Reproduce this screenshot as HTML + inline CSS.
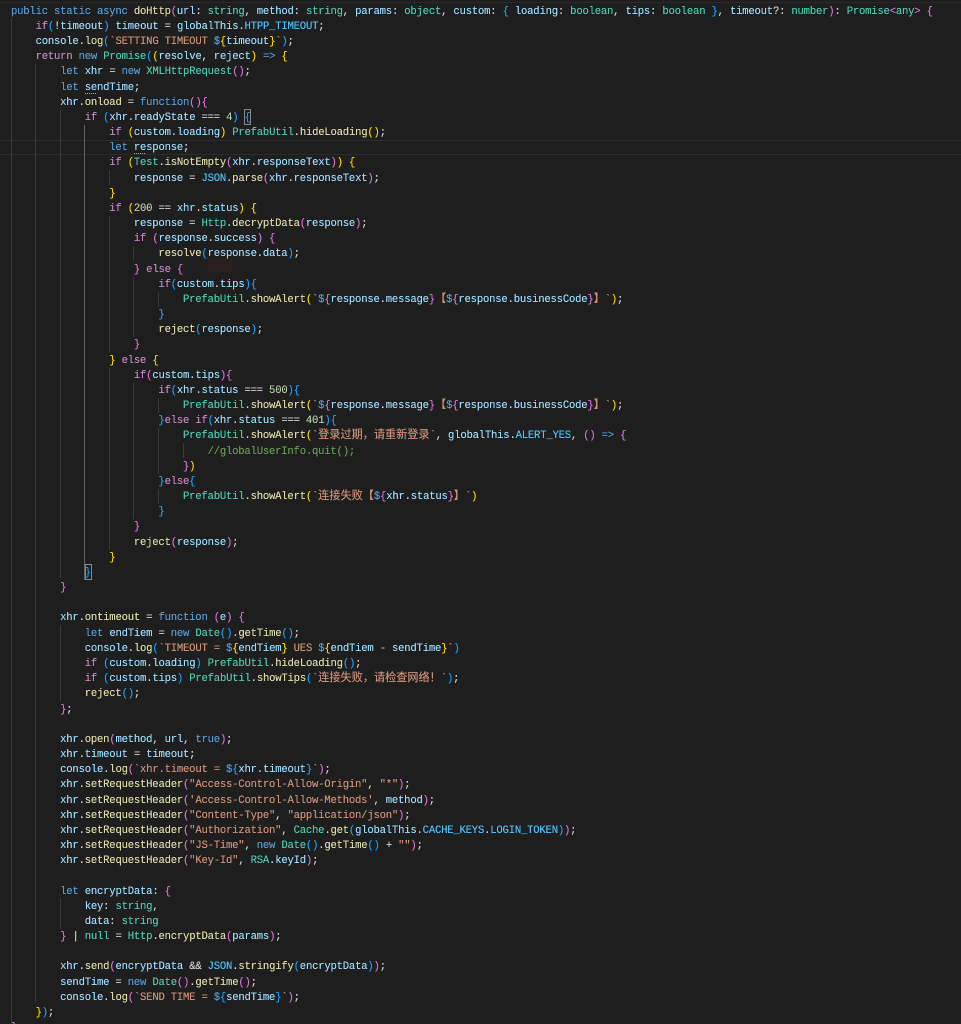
<!DOCTYPE html>
<html><head><meta charset="utf-8"><style>
html,body{margin:0;padding:0;background:#1e1e1e;width:961px;height:1024px;overflow:hidden}
#w{position:relative;width:961px;height:1024px;overflow:hidden;font:10.6px/15.17px "Liberation Mono","Noto Sans CJK SC",monospace;color:#d4d4d4;letter-spacing:-.215px;filter:blur(.3px)}
pre{position:absolute;left:11px;margin:1.3px 0 0;font:inherit;white-space:pre;height:15.17px;text-shadow:0 0 .3px currentColor}
i{font-style:normal}
.k{color:#569cd6}.c{color:#c586c0}.v{color:#9cdcfe}.t{color:#4ec9b0}.f{color:#dcdcaa}.s{color:#ce9178}.n{color:#b5cea8}.m{color:#6a9955}.u{color:#4fc1ff}
.g{color:#ffd700}.p{color:#da70d6}.b{color:#179fff}
.z{font-size:11.15px;letter-spacing:0}
.r{position:absolute;width:1px;background:#3a3a3a}
.a{position:absolute}
</style></head><body><div id="w">
<div class="a" style="left:0;top:2px;width:961px;height:1px;background:#2a2a2a"></div>
<div class="a" style="left:0;top:140px;width:961px;height:1px;background:#2c2c2c"></div>
<div class="a" style="left:0;top:153.5px;width:961px;height:1px;background:#2c2c2c"></div>
<div class="a" style="left:208px;top:258px;width:24px;height:14px;background:#33211f;opacity:.5"></div>

<div class="r" style="left:11px;top:18px;height:1006px"></div>
<div class="r" style="left:35px;top:64px;height:938px"></div>
<div class="r" style="left:60px;top:110px;height:468px"></div>
<div class="r" style="left:60px;top:625px;height:76px"></div>
<div class="r" style="left:60px;top:898px;height:31px"></div>
<div class="r" style="left:84px;top:125px;height:455px;background:#626262"></div>
<div class="r" style="left:109px;top:170px;height:15px"></div>
<div class="r" style="left:109px;top:216px;height:136px"></div>
<div class="r" style="left:109px;top:368px;height:182px"></div>
<div class="r" style="left:133px;top:246px;height:15px"></div>
<div class="r" style="left:133px;top:277px;height:60px"></div>
<div class="r" style="left:133px;top:383px;height:136px"></div>
<div class="r" style="left:158px;top:292px;height:15px"></div>
<div class="r" style="left:158px;top:398px;height:15px"></div>
<div class="r" style="left:158px;top:428px;height:46px"></div>
<div class="r" style="left:158px;top:489px;height:15px"></div>
<div class="r" style="left:183px;top:443px;height:15px"></div>

<div class="a" style="left:244px;top:109px;width:5px;height:14px;border:1px solid #888"></div>
<div class="a" style="left:85px;top:564px;width:5px;height:14px;border:1px solid #888"></div>
<div class="a" style="left:85px;top:92.5px;width:11px;height:0;border-top:1px dotted #aaa"></div>
<div class="a" style="left:134px;top:153px;width:11px;height:0;border-top:1px dotted #aaa"></div>

<pre style="top:3.4px"><i class="k">public static async</i> <i class="f">doHttp</i><i class="p">(</i><i class="v">url</i>: <i class="t">string</i>, <i class="v">method</i>: <i class="t">string</i>, <i class="v">params</i>: <i class="t">object</i>, <i class="v">custom</i>: <i class="b">{</i> <i class="v">loading</i>: <i class="t">boolean</i>, <i class="v">tips</i>: <i class="t">boolean</i> <i class="b">}</i>, <i class="v">timeout</i>?: <i class="t">number</i><i class="p">)</i>: <i class="t">Promise</i><i class="p">&lt;</i><i class="t">any</i><i class="p">&gt;</i> <i class="p">{</i></pre>
<pre style="top:18.57px">    <i class="c">if</i><i class="b">(</i>!<i class="v">timeout</i><i class="b">)</i> <i class="v">timeout</i> = <i class="v">globalThis</i>.<i class="u">HTPP_TIMEOUT</i>;</pre>
<pre style="top:33.74px">    <i class="v">console</i>.<i class="f">log</i><i class="b">(</i><i class="s">`SETTING TIMEOUT </i><i class="k">$</i><i class="g">{</i><i class="v">timeout</i><i class="g">}</i><i class="s">`</i><i class="b">)</i>;</pre>
<pre style="top:48.91px">    <i class="c">return</i> <i class="k">new</i> <i class="t">Promise</i><i class="b">(</i><i class="g">(</i><i class="v">resolve</i>, <i class="v">reject</i><i class="g">)</i> <i class="k">=&gt;</i> <i class="g">{</i></pre>
<pre style="top:64.08px">        <i class="k">let</i> <i class="v">xhr</i> = <i class="k">new</i> <i class="t">XMLHttpRequest</i><i class="p">()</i>;</pre>
<pre style="top:79.25px">        <i class="k">let</i> <i class="v">sendTime</i>;</pre>
<pre style="top:94.42px">        <i class="v">xhr</i>.<i class="f">onload</i> = <i class="k">function</i><i class="p">(){</i></pre>
<pre style="top:109.59px">            <i class="c">if</i> <i class="b">(</i><i class="v">xhr</i>.<i class="v">readyState</i> === <i class="n">4</i><i class="b">)</i> <i class="b">{</i></pre>
<pre style="top:124.76px">                <i class="c">if</i> <i class="g">(</i><i class="v">custom</i>.<i class="v">loading</i><i class="g">)</i> <i class="t">PrefabUtil</i>.<i class="f">hideLoading</i><i class="g">()</i>;</pre>
<pre style="top:139.93px">                <i class="k">let</i> <i class="v">response</i>;</pre>
<pre style="top:155.1px">                <i class="c">if</i> <i class="g">(</i><i class="t">Test</i>.<i class="f">isNotEmpty</i><i class="p">(</i><i class="v">xhr</i>.<i class="v">responseText</i><i class="p">)</i><i class="g">)</i> <i class="g">{</i></pre>
<pre style="top:170.27px">                    <i class="v">response</i> = <i class="u">JSON</i>.<i class="f">parse</i><i class="p">(</i><i class="v">xhr</i>.<i class="v">responseText</i><i class="p">)</i>;</pre>
<pre style="top:185.44px">                <i class="g">}</i></pre>
<pre style="top:200.61px">                <i class="c">if</i> <i class="g">(</i><i class="n">200</i> == <i class="v">xhr</i>.<i class="v">status</i><i class="g">)</i> <i class="g">{</i></pre>
<pre style="top:215.78px">                    <i class="v">response</i> = <i class="t">Http</i>.<i class="f">decryptData</i><i class="p">(</i><i class="v">response</i><i class="p">)</i>;</pre>
<pre style="top:230.95px">                    <i class="c">if</i> <i class="p">(</i><i class="v">response</i>.<i class="v">success</i><i class="p">)</i> <i class="p">{</i></pre>
<pre style="top:246.12px">                        <i class="f">resolve</i><i class="b">(</i><i class="v">response</i>.<i class="v">data</i><i class="b">)</i>;</pre>
<pre style="top:261.29px">                    <i class="p">}</i> <i class="c">else</i> <i class="p">{</i></pre>
<pre style="top:276.46px">                        <i class="c">if</i><i class="b">(</i><i class="v">custom</i>.<i class="v">tips</i><i class="b">){</i></pre>
<pre style="top:291.63px">                            <i class="t">PrefabUtil</i>.<i class="f">showAlert</i><i class="g">(</i><i class="s">`</i><i class="k">$</i><i class="p">{</i><i class="v">response</i>.<i class="v">message</i><i class="p">}</i><i class="s z">【</i><i class="k">$</i><i class="p">{</i><i class="v">response</i>.<i class="v">businessCode</i><i class="p">}</i><i class="s z">】</i><i class="s">`</i><i class="g">)</i>;</pre>
<pre style="top:306.8px">                        <i class="b">}</i></pre>
<pre style="top:321.97px">                        <i class="f">reject</i><i class="b">(</i><i class="v">response</i><i class="b">)</i>;</pre>
<pre style="top:337.14px">                    <i class="p">}</i></pre>
<pre style="top:352.31px">                <i class="g">}</i> <i class="c">else</i> <i class="g">{</i></pre>
<pre style="top:367.48px">                    <i class="c">if</i><i class="p">(</i><i class="v">custom</i>.<i class="v">tips</i><i class="p">){</i></pre>
<pre style="top:382.65px">                        <i class="c">if</i><i class="b">(</i><i class="v">xhr</i>.<i class="v">status</i> === <i class="n">500</i><i class="b">){</i></pre>
<pre style="top:397.82px">                            <i class="t">PrefabUtil</i>.<i class="f">showAlert</i><i class="g">(</i><i class="s">`</i><i class="k">$</i><i class="p">{</i><i class="v">response</i>.<i class="v">message</i><i class="p">}</i><i class="s z">【</i><i class="k">$</i><i class="p">{</i><i class="v">response</i>.<i class="v">businessCode</i><i class="p">}</i><i class="s z">】</i><i class="s">`</i><i class="g">)</i>;</pre>
<pre style="top:412.99px">                        <i class="b">}</i><i class="c">else if</i><i class="b">(</i><i class="v">xhr</i>.<i class="v">status</i> === <i class="n">401</i><i class="b">){</i></pre>
<pre style="top:428.16px">                            <i class="t">PrefabUtil</i>.<i class="f">showAlert</i><i class="g">(</i><i class="s">`</i><i class="s z">登录过期，请重新登录</i><i class="s">`</i>, <i class="v">globalThis</i>.<i class="u">ALERT_YES</i>, <i class="p">()</i> <i class="k">=&gt;</i> <i class="p">{</i></pre>
<pre style="top:443.33px">                                <i class="m">//globalUserInfo.quit();</i></pre>
<pre style="top:458.5px">                            <i class="p">}</i><i class="g">)</i></pre>
<pre style="top:473.67px">                        <i class="b">}</i><i class="c">else</i><i class="b">{</i></pre>
<pre style="top:488.84px">                            <i class="t">PrefabUtil</i>.<i class="f">showAlert</i><i class="g">(</i><i class="s">`</i><i class="s z">连接失败【</i><i class="k">$</i><i class="p">{</i><i class="v">xhr</i>.<i class="v">status</i><i class="p">}</i><i class="s z">】</i><i class="s">`</i><i class="g">)</i></pre>
<pre style="top:504.01px">                        <i class="b">}</i></pre>
<pre style="top:519.18px">                    <i class="p">}</i></pre>
<pre style="top:534.35px">                    <i class="f">reject</i><i class="p">(</i><i class="v">response</i><i class="p">)</i>;</pre>
<pre style="top:549.52px">                <i class="g">}</i></pre>
<pre style="top:564.69px">            <i class="b">}</i></pre>
<pre style="top:579.86px">        <i class="p">}</i></pre>
<pre style="top:610.2px">        <i class="v">xhr</i>.<i class="f">ontimeout</i> = <i class="k">function</i> <i class="p">(</i><i class="v">e</i><i class="p">)</i> <i class="p">{</i></pre>
<pre style="top:625.37px">            <i class="k">let</i> <i class="v">endTiem</i> = <i class="k">new</i> <i class="t">Date</i><i class="b">()</i>.<i class="f">getTime</i><i class="b">()</i>;</pre>
<pre style="top:640.54px">            <i class="v">console</i>.<i class="f">log</i><i class="b">(</i><i class="s">`TIMEOUT = </i><i class="k">$</i><i class="g">{</i><i class="v">endTiem</i><i class="g">}</i><i class="s"> UES </i><i class="k">$</i><i class="g">{</i><i class="v">endTiem</i> - <i class="v">sendTime</i><i class="g">}</i><i class="s">`</i><i class="b">)</i></pre>
<pre style="top:655.71px">            <i class="c">if</i> <i class="b">(</i><i class="v">custom</i>.<i class="v">loading</i><i class="b">)</i> <i class="t">PrefabUtil</i>.<i class="f">hideLoading</i><i class="b">()</i>;</pre>
<pre style="top:670.88px">            <i class="c">if</i> <i class="b">(</i><i class="v">custom</i>.<i class="v">tips</i><i class="b">)</i> <i class="t">PrefabUtil</i>.<i class="f">showTips</i><i class="b">(</i><i class="s">`</i><i class="s z">连接失败，请检查网络！</i><i class="s">`</i><i class="b">)</i>;</pre>
<pre style="top:686.05px">            <i class="f">reject</i><i class="b">()</i>;</pre>
<pre style="top:701.22px">        <i class="p">}</i>;</pre>
<pre style="top:731.56px">        <i class="v">xhr</i>.<i class="f">open</i><i class="p">(</i><i class="v">method</i>, <i class="v">url</i>, <i class="k">true</i><i class="p">)</i>;</pre>
<pre style="top:746.73px">        <i class="v">xhr</i>.<i class="v">timeout</i> = <i class="v">timeout</i>;</pre>
<pre style="top:761.9px">        <i class="v">console</i>.<i class="f">log</i><i class="p">(</i><i class="s">`xhr.timeout = </i><i class="k">$</i><i class="b">{</i><i class="v">xhr</i>.<i class="v">timeout</i><i class="b">}</i><i class="s">`</i><i class="p">)</i>;</pre>
<pre style="top:777.07px">        <i class="v">xhr</i>.<i class="f">setRequestHeader</i><i class="p">(</i><i class="s">"Access-Control-Allow-Origin"</i>, <i class="s">"*"</i><i class="p">)</i>;</pre>
<pre style="top:792.24px">        <i class="v">xhr</i>.<i class="f">setRequestHeader</i><i class="p">(</i><i class="s">'Access-Control-Allow-Methods'</i>, <i class="v">method</i><i class="p">)</i>;</pre>
<pre style="top:807.41px">        <i class="v">xhr</i>.<i class="f">setRequestHeader</i><i class="p">(</i><i class="s">"Content-Type"</i>, <i class="s">"application/json"</i><i class="p">)</i>;</pre>
<pre style="top:822.58px">        <i class="v">xhr</i>.<i class="f">setRequestHeader</i><i class="p">(</i><i class="s">"Authorization"</i>, <i class="t">Cache</i>.<i class="f">get</i><i class="b">(</i><i class="v">globalThis</i>.<i class="u">CACHE_KEYS</i>.<i class="u">LOGIN_TOKEN</i><i class="b">)</i><i class="p">)</i>;</pre>
<pre style="top:837.75px">        <i class="v">xhr</i>.<i class="f">setRequestHeader</i><i class="p">(</i><i class="s">"JS-Time"</i>, <i class="k">new</i> <i class="t">Date</i><i class="b">()</i>.<i class="f">getTime</i><i class="b">()</i> + <i class="s">""</i><i class="p">)</i>;</pre>
<pre style="top:852.92px">        <i class="v">xhr</i>.<i class="f">setRequestHeader</i><i class="p">(</i><i class="s">"Key-Id"</i>, <i class="t">RSA</i>.<i class="v">keyId</i><i class="p">)</i>;</pre>
<pre style="top:883.26px">        <i class="k">let</i> <i class="v">encryptData</i>: <i class="p">{</i></pre>
<pre style="top:898.43px">            <i class="v">key</i>: <i class="t">string</i>,</pre>
<pre style="top:913.6px">            <i class="v">data</i>: <i class="t">string</i></pre>
<pre style="top:928.77px">        <i class="p">}</i> | <i class="t">null</i> = <i class="t">Http</i>.<i class="f">encryptData</i><i class="p">(</i><i class="v">params</i><i class="p">)</i>;</pre>
<pre style="top:959.11px">        <i class="v">xhr</i>.<i class="f">send</i><i class="p">(</i><i class="v">encryptData</i> &amp;&amp; <i class="u">JSON</i>.<i class="f">stringify</i><i class="b">(</i><i class="v">encryptData</i><i class="b">)</i><i class="p">)</i>;</pre>
<pre style="top:974.28px">        <i class="v">sendTime</i> = <i class="k">new</i> <i class="t">Date</i><i class="p">()</i>.<i class="f">getTime</i><i class="p">()</i>;</pre>
<pre style="top:989.45px">        <i class="v">console</i>.<i class="f">log</i><i class="p">(</i><i class="s">`SEND TIME = </i><i class="k">$</i><i class="b">{</i><i class="v">sendTime</i><i class="b">}</i><i class="s">`</i><i class="p">)</i>;</pre>
<pre style="top:1004.62px">    <i class="g">}</i><i class="b">)</i>;</pre>
<pre style="top:1019.79px"><i class="p">}</i></pre>
</div></body></html>
